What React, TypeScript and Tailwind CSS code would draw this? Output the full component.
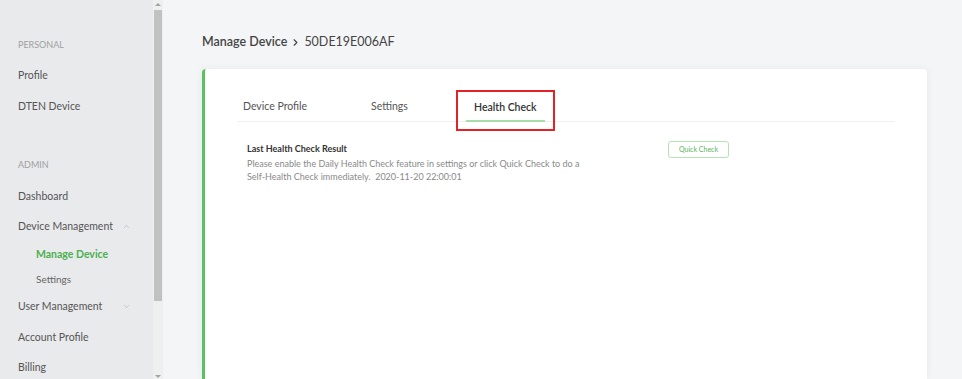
import { ChevronDown, ChevronUp, ChevronRight } from "lucide-react";

const font = { fontFamily: "Lato, 'Open Sans', sans-serif" };

export default function App() {
  return (
    <div
      className="flex h-[379px] w-[962px] overflow-hidden bg-[#f4f5f7]"
      style={font}
    >
      {/* sidebar */}
      <aside className="flex w-[153px] shrink-0 flex-col bg-[#e9eaec] pl-[18px] pr-[22px] text-[10.5px] leading-[14px] text-[#555]">
        <div className="mt-[38px] text-[9px] text-[#a0a0a0]">PERSONAL</div>
        <div className="mt-[16px]">Profile</div>
        <div className="mt-[17px]">DTEN Device</div>
        <div className="mt-[45px] text-[9px] text-[#a0a0a0]">ADMIN</div>
        <div className="mt-[17px]">Dashboard</div>
        <div className="mt-[16px] flex items-center">
          <span className="flex-1">Device Management</span>
          <ChevronUp size={9} strokeWidth={1.5} className="text-[#aaa]" />
        </div>
        <div className="mt-[14px] pl-[18px] text-[10.5px] font-bold text-[#4cb050]">
          Manage Device
        </div>
        <div className="mt-[11px] pl-[18px] text-[10px] text-[#666]">Settings</div>
        <div className="mt-[13px] flex items-center">
          <span className="flex-1">User Management</span>
          <ChevronDown size={9} strokeWidth={1.5} className="text-[#aaa]" />
        </div>
        <div className="mt-[17px]">Account Profile</div>
        <div className="mt-[16px]">Billing</div>
      </aside>

      {/* scrollbar */}
      <div className="flex w-[10px] shrink-0 flex-col items-center bg-[#efefef]">
        <div className="mt-[3px] h-0 w-0 border-x-[3px] border-b-[3px] border-x-transparent border-b-[#a3a3a3]" />
        <div className="mt-[4px] h-[291px] w-[8px] bg-[#c1c1c1]" />
        <div className="flex-1" />
        <div className="mb-[1px] h-0 w-0 border-x-[3px] border-t-[3px] border-x-transparent border-t-[#a3a3a3]" />
      </div>

      {/* main */}
      <main className="flex flex-1 flex-col pl-[39px] pr-[35px]">
        <div className="mt-[34px] flex items-center text-[12.5px] leading-[16px] text-[#444]">
          <span className="font-semibold">Manage Device</span>
          <ChevronRight size={11} strokeWidth={2.5} className="mx-[3px] text-[#444]" />
          <span>50DE19E006AF</span>
        </div>

        <div className="mt-[19px] flex-1 rounded-tl-[4px] rounded-tr-[4px] border-l-[3px] border-[#5ac25a] bg-white pl-[32px] pr-[32px] shadow-[0_0_8px_rgba(0,0,0,0.06)]">
          {/* tabs */}
          <div className="mt-[30px] flex items-end border-b border-[#f0f0f0] pl-[6px] text-[10.5px] leading-[14px] text-[#555]">
            <div className="w-[128px] pb-[8px]">Device Profile</div>
            <div className="w-[103px] pb-[8px]">Settings</div>
            <div className="relative">
              <div className="-mx-[8px] -mb-px border-b-[2px] border-[#a8dca8] px-[8px] pb-[6px] font-semibold text-[#333]">
                Health Check
              </div>
              <div className="pointer-events-none absolute -bottom-[10px] -left-[18px] -right-[18px] -top-[10px] border-2 border-[#e32228]" />
            </div>
          </div>

          {/* content */}
          <div className="mt-[21px] flex pl-[10px]">
            <div className="w-[421px]">
              <div className="text-[9px] font-bold leading-[12px] text-[#333]">Last Health Check Result</div>
              <div className="mt-[2px] w-[345px] text-[9px] leading-[13px] text-[#8a8a8a]">
                Please enable the Daily Health Check feature in settings or click Quick Check to do a Self-Health Check immediately.&nbsp; 2020-11-20 22:00:01
              </div>
            </div>
            <button className="-mt-[2px] h-[17px] w-[61px] rounded-[3px] border border-[#b6e2b6] text-[7px] text-[#5ab45a]">
              Quick Check
            </button>
          </div>
        </div>
      </main>
    </div>
  );
}
